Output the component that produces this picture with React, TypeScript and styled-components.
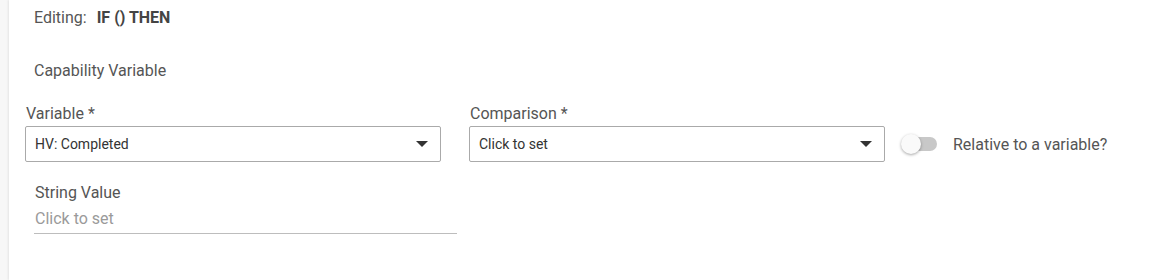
import React from "react";
import styled, { createGlobalStyle } from "styled-components";

const Global = createGlobalStyle`
  html, body { margin: 0; padding: 0; background: #f7f7f7; }
  body { font-family: Roboto, "Liberation Sans", Arial, sans-serif; }
`;

const Page = styled.div`
  display: flex;
  height: 280px;
`;

const Gutter = styled.div`
  width: 9px;
  flex: none;
  background: #f7f7f7;
`;

const Panel = styled.div`
  flex: 1;
  background: #fff;
  box-shadow: -1px 0 2px rgba(0, 0, 0, 0.08);
  padding: 7px 0 0 0;
  color: #555;
`;

const EditingRow = styled.div`
  display: flex;
  align-items: center;
  gap: 10px;
  height: 20px;
  padding-left: 25px;
  font-size: 16px;
`;

const EditingTitle = styled.span`
  font-weight: 700;
  color: #444;
`;

const SectionTitle = styled.div`
  margin-top: 34px;
  padding-left: 25px;
  height: 20px;
  line-height: 20px;
  font-size: 16px;
`;

const FieldRow = styled.div`
  display: flex;
  align-items: flex-end;
  gap: 28px;
  margin-top: 23px;
  padding-left: 16px;
`;

const Field = styled.div`
  display: flex;
  flex-direction: column;
  width: 416px;
`;

const Label = styled.label`
  font-size: 16px;
  line-height: 20px;
  color: #555;
  padding-left: 1px;
  margin-bottom: 2px;
`;

const Select = styled.div`
  box-sizing: border-box;
  height: 36px;
  border: 1px solid #aaa;
  border-radius: 2px;
  display: flex;
  align-items: center;
  justify-content: space-between;
  padding: 0 12px 0 9px;
  font-size: 14px;
  color: #333;
`;

const Caret = styled.span`
  width: 0;
  height: 0;
  border-left: 6px solid transparent;
  border-right: 6px solid transparent;
  border-top: 6px solid #333;
`;

const ToggleWrap = styled.label`
  display: flex;
  align-items: center;
  gap: 16px;
  height: 36px;
  margin-left: -12px;
  font-size: 16px;
  color: #555;
`;

const Switch = styled.span`
  position: relative;
  width: 36px;
  height: 20px;
  display: inline-block;
`;

const Track = styled.span`
  position: absolute;
  left: 2px;
  top: 3px;
  width: 34px;
  height: 14px;
  border-radius: 7px;
  background: #c8c8c8;
`;

const Knob = styled.span`
  position: absolute;
  left: 0;
  top: 0;
  width: 20px;
  height: 20px;
  border-radius: 50%;
  background: #fafafa;
  box-shadow: 0 1px 3px rgba(0, 0, 0, 0.35);
`;

const TextField = styled.div`
  margin-top: 21px;
  margin-left: 25px;
  width: 423px;
  display: flex;
  flex-direction: column;
`;

const TextLabel = styled.div`
  font-size: 16px;
  line-height: 20px;
  padding-left: 1px;
`;

const TextInput = styled.div`
  font-size: 16px;
  line-height: 20px;
  color: #9a9a9a;
  padding: 6px 0 4px 1px;
  border-bottom: 1px solid #bdbdbd;
`;

export default function App() {
  return (
    <>
      <Global />
      <Page>
        <Gutter />
        <Panel>
          <EditingRow>
            <span>Editing:</span>
            <EditingTitle>IF () THEN</EditingTitle>
          </EditingRow>
          <SectionTitle>Capability Variable</SectionTitle>
          <FieldRow>
            <Field>
              <Label>Variable *</Label>
              <Select>
                <span>HV: Completed</span>
                <Caret />
              </Select>
            </Field>
            <Field>
              <Label>Comparison *</Label>
              <Select>
                <span>Click to set</span>
                <Caret />
              </Select>
            </Field>
            <ToggleWrap>
              <Switch>
                <Track />
                <Knob />
              </Switch>
              <span>Relative to a variable?</span>
            </ToggleWrap>
          </FieldRow>
          <TextField>
            <TextLabel>String Value</TextLabel>
            <TextInput>Click to set</TextInput>
          </TextField>
        </Panel>
      </Page>
    </>
  );
}
